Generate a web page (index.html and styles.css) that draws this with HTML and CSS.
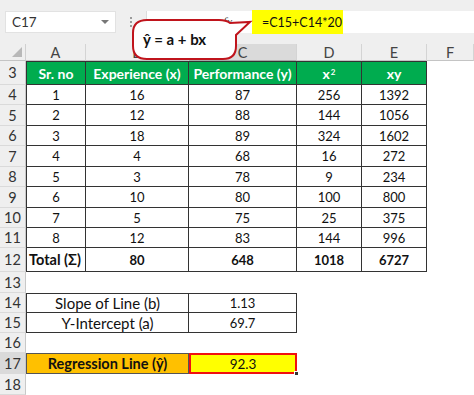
FILE: index.html
```html
<!DOCTYPE html>
<html>
<head>
<meta charset="utf-8">
<link rel="stylesheet" href="styles.css">
</head>
<body>
<div class="toolbar">
  <div class="namebox"><span class="nb-text">C17</span><span class="caret"></span></div>
  <div class="dots"><i></i><i></i><i></i></div>
  <div class="formula"><span class="fx">fx</span><span class="fhl">=C15+C14*20</span></div>
</div>
<div class="sheet">
  <div class="corner"><span class="tri"></span></div>
  <div class="ch">A</div><div class="ch">B</div><div class="ch sel">C</div><div class="ch">D</div><div class="ch">E</div><div class="ch">F</div>

  <div class="rh">3</div>
  <div class="c g first top">Sr. no</div><div class="c g top">Experience (x)</div><div class="c g top">Performance (y)</div><div class="c g top">x<sup>2</sup></div><div class="c g top">xy</div><div class="e"></div>

  <div class="rh">4</div><div class="c first">1</div><div class="c">16</div><div class="c">87</div><div class="c">256</div><div class="c">1392</div><div class="e"></div>
  <div class="rh">5</div><div class="c first">2</div><div class="c">12</div><div class="c">88</div><div class="c">144</div><div class="c">1056</div><div class="e"></div>
  <div class="rh">6</div><div class="c first">3</div><div class="c">18</div><div class="c">89</div><div class="c">324</div><div class="c">1602</div><div class="e"></div>
  <div class="rh">7</div><div class="c first">4</div><div class="c">4</div><div class="c">68</div><div class="c">16</div><div class="c">272</div><div class="e"></div>
  <div class="rh">8</div><div class="c first">5</div><div class="c">3</div><div class="c">78</div><div class="c">9</div><div class="c">234</div><div class="e"></div>
  <div class="rh">9</div><div class="c first">6</div><div class="c">10</div><div class="c">80</div><div class="c">100</div><div class="c">800</div><div class="e"></div>
  <div class="rh">10</div><div class="c first">7</div><div class="c">5</div><div class="c">75</div><div class="c">25</div><div class="c">375</div><div class="e"></div>
  <div class="rh">11</div><div class="c first">8</div><div class="c">12</div><div class="c">83</div><div class="c">144</div><div class="c">996</div><div class="e"></div>
  <div class="rh">12</div><div class="c first b left lbl-b">Total (Σ)</div><div class="c b">80</div><div class="c b">648</div><div class="c b">1018</div><div class="c b">6727</div><div class="e"></div>

  <div class="rh">13</div><div class="e span-all"></div>

  <div class="rh">14</div><div class="c first top span2 lbl">Slope of Line (b)</div><div class="c top">1.13</div><div class="e span-rest"></div>
  <div class="rh">15</div><div class="c first span2 lbl">Y-Intercept (a)</div><div class="c">69.7</div><div class="e span-rest"></div>

  <div class="rh">16</div><div class="e span-all"></div>

  <div class="rh sel">17</div><div class="c first top span2 orange b lbl-b">Regression Line (ŷ)</div><div class="yel">92.3<span class="handle"></span></div><div class="e span-rest"></div>

  <div class="rh">18</div><div class="e span-all"></div>
</div>

<svg class="callout" width="474" height="70" viewBox="0 0 474 70">
  <path d="M147,20 H219 Q226,20 230,23 L250,22 L236,35 V46 Q236,59 223,59 H147 Q133,59 133,46 V33 Q133,20 147,20 Z" fill="#ffffff" stroke="#c0141c" stroke-width="2"/>
</svg>
<span class="callout-text">ŷ = a + bx</span>
</body>
</html>
```

FILE: styles.css
```css
* { box-sizing: border-box; }
html, body { margin: 0; padding: 0; background: #ffffff; }
body {
  width: 474px;
  height: 395px;
  overflow: hidden;
  position: relative;
  font-family: Lato, "Open Sans", sans-serif;
  color: #111;
}

.toolbar {
  height: 44px;
  background: #efefef;
  display: flex;
  align-items: flex-start;
  padding: 11px 0 0 5px;
}
.namebox {
  width: 111px;
  height: 22px;
  background: #fff;
  border: 1px solid #e2e2e2;
  display: flex;
  align-items: center;
  justify-content: space-between;
  padding: 0 6px 0 6px;
  font-size: 13.5px;
  color: #333;
}
.caret {
  width: 0; height: 0;
  border-left: 4px solid transparent;
  border-right: 4px solid transparent;
  border-top: 4px solid #777;
}
.dots {
  width: 30px;
  height: 22px;
  display: flex;
  flex-direction: column;
  align-items: center;
  justify-content: center;
  gap: 2px;
}
.dots i {
  display: block;
  width: 2px; height: 2px;
  background: #9a9a9a;
}
.formula {
  flex: 1;
  height: 22px;
  background: #fff;
  border-left: 1px solid #dcdcdc;
  display: flex;
  align-items: center;
}
.fx {
  margin-left: 76px;
  width: 14px;
  font-style: italic;
  font-family: "Liberation Serif", serif;
  font-size: 13px;
  color: #555;
}
.fhl {
  margin-left: 15px;
  height: 24px;
  width: 91px;
  background: #ffff00;
  display: flex;
  align-items: center;
  padding-left: 10px;
  font-size: 12.5px;
  color: #111;
}

.sheet {
  display: grid;
  grid-template-columns: 26px 60px 103px 108px 65px 65px 1fr;
  grid-template-rows: 17px 24px 20px 21px 20px 21px 20px 21px 20px 20px 24px 21px 20px 20px 20px 21px 21px;
}
.corner {
  background: #efefef;
  border-right: 1px solid #d0d0d0;
  border-bottom: 1px solid #c4c4c4;
  position: relative;
}
.tri {
  position: absolute;
  right: 3px;
  bottom: 3px;
  width: 0; height: 0;
  border-left: 10px solid transparent;
  border-bottom: 10px solid #b8b8b8;
}
.ch {
  background: #efefef;
  border-right: 1px solid #d4d4d4;
  border-bottom: 1px solid #c4c4c4;
  display: flex;
  align-items: center;
  justify-content: center;
  font-size: 14.5px;
  color: #444;
}
.ch.sel { background: #dadada; border-bottom: 1px solid #a8a8a8; }
.rh {
  background: #efefef;
  border-right: 1px solid #c8c8c8;
  border-bottom: 1px solid #dadada;
  display: flex;
  align-items: center;
  justify-content: center;
  font-size: 14.5px;
  color: #333;
}
.rh.sel { background: #dadada; }

.c {
  border-right: 1px solid #333;
  border-bottom: 1px solid #333;
  display: flex;
  align-items: center;
  justify-content: center;
  font-size: 13px;
  color: #111;
  background: #fff;
}
.c.first { border-left: 1px solid #333; }
.c.top { border-top: 1px solid #333; }
.c.g {
  background: #00ac4f;
  color: #fff;
  font-weight: 700;
  font-size: 14px;
}
.c.g sup { font-size: 8px; margin-left: 1px; position: relative; top: -1px; }
.c.b { font-weight: 700; }
.c.lbl { font-size: 15px; }
.c.lbl-b { font-size: 14.5px; }
.c.left { justify-content: flex-start; padding-left: 2px; }
.span2 { grid-column: span 2; }
.span-all { grid-column: 2 / -1; }
.span-rest { grid-column: 5 / -1; }
.e { background: #fff; }
.c.orange { background: #ffc000; border-color: #555; }

.yel {
  position: relative;
  background: #ffff00;
  border: 2px solid #f01010;
  display: flex;
  align-items: center;
  justify-content: center;
  font-size: 13.5px;
  color: #111;
}
.handle {
  position: absolute;
  right: -4px;
  bottom: -4px;
  width: 5px;
  height: 5px;
  background: #333;
  border: 1px solid #fff;
}

.callout {
  position: absolute;
  left: 0;
  top: 0;
}
.callout-text {
  position: absolute;
  left: 143px;
  top: 30px;
  font-size: 15px;
  font-weight: 700;
  color: #111;
  white-space: nowrap;
}
```
